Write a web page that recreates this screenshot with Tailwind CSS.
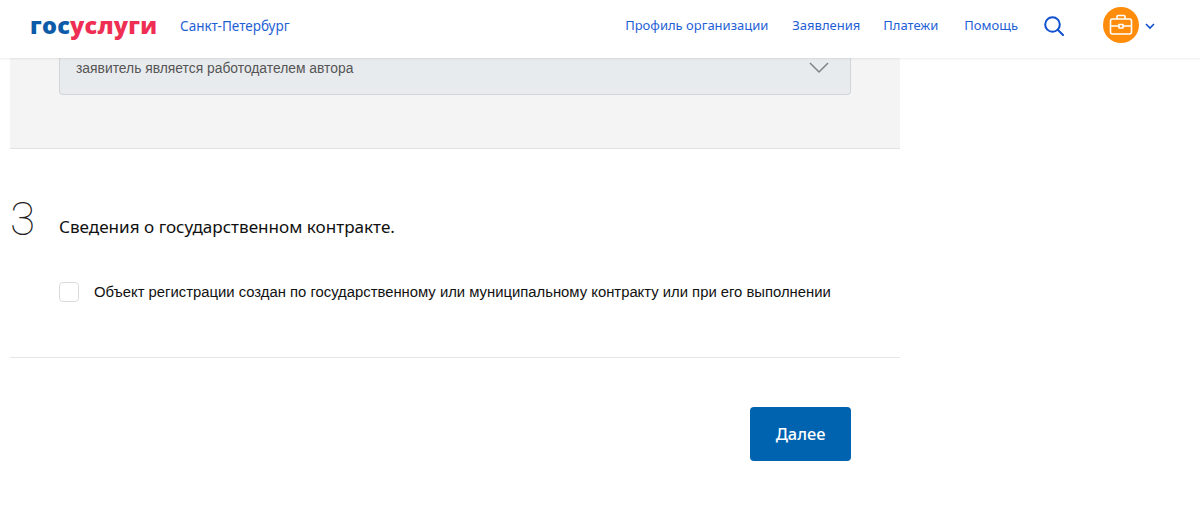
<!DOCTYPE html>
<html lang="ru">
<head>
    <meta charset="UTF-8">
    <script src="https://cdn.jsdelivr.net/npm/@tailwindcss/browser@4"></script>
    <title>Госуслуги</title>
</head>
<body class="bg-white font-['Liberation_Sans',sans-serif] h-[520px] overflow-hidden">
    <!-- Header -->
    <header class="relative z-10 h-[58px] bg-white shadow-[0_1px_2px_rgba(0,0,0,0.08)] flex items-center pl-[30px] pb-[6px] font-['Noto_Sans',sans-serif]">
        <a class="w-[127px] font-['Open_Sans',sans-serif] font-extrabold text-[23.5px] tracking-[0.2px] leading-[24px] -mt-[2px] whitespace-nowrap">
            <span class="text-[#0d5ba8]">гос</span><span class="text-[#ee2f53]">услуги</span>
        </a>
        <a class="ml-[23px] text-[13.5px] text-[#1f5fd6]">Санкт-Петербург</a>
        <nav class="ml-auto flex items-center text-[13px] text-[#1f5fd6]">
            <a class="mr-[24px]">Профиль организации</a>
            <a class="mr-[23px]">Заявления</a>
            <a class="mr-[26px]">Платежи</a>
            <a class="mr-[26px]">Помощь</a>
            <svg class="w-[20px] h-[20px] mr-[39px]" viewBox="0 0 20 20" fill="none" stroke="#0f4fd0" stroke-width="2" stroke-linecap="round"><circle cx="8.5" cy="8.5" r="7.3"/><path d="M14 14l5 5"/></svg>
        </nav>
        <div class="w-[36px] h-[36px] -mt-[2px] rounded-full bg-[#ff8c0a] flex items-center justify-center">
            <svg class="w-[24px] h-[24px]" viewBox="0 0 24 24" fill="none" stroke="#fff" stroke-width="1.6" stroke-linejoin="round">
                <rect x="1.5" y="6" width="21" height="15" rx="2"/>
                <path d="M8 6V3.5a1 1 0 0 1 1-1h6a1 1 0 0 1 1 1V6"/>
                <path d="M1.5 13h8.5M14 13h8.5"/>
                <rect x="10" y="11.5" width="4" height="3.5"/>
            </svg>
        </div>
        <svg class="w-[10px] h-[7px] ml-[6px] mr-[45px]" viewBox="0 0 10 7" fill="none" stroke="#0f4fd0" stroke-width="1.6"><path d="M1 1l4 4 4-4"/></svg>
    </header>

    <main class="ml-[10px] w-[890px]">
        <!-- Previous step, cut off by the header -->
        <section class="h-[91px] bg-[#f4f4f4] border-b border-[#e0e3e5] px-[49px]">
            <div class="h-[37px] bg-[#e8ebee] border border-t-0 border-[#d3d6d9] rounded-b-[4px] flex items-start justify-between pl-[16px] pr-[21px]">
                <span class="text-[13.85px] leading-[20px] text-[#555]">заявитель является работодателем автора</span>
                <svg class="w-[20px] h-[12px] mt-[4px]" viewBox="0 0 20 12" fill="none" stroke="#7d8286" stroke-width="1.5"><path d="M1 1l9 9 9-9"/></svg>
            </div>
        </section>

        <!-- Step 3 -->
        <section class="h-[209px] border-b border-[#e4e6e8]">
            <div class="flex items-start pt-[44px] h-[119px]">
                <span class="w-[49px] font-['Roboto',sans-serif] font-thin text-[46px] leading-[52px] text-[#222]">3</span>
                <h2 class="mt-[22px] font-['Noto_Sans',sans-serif] text-[17.1px] leading-[24px] text-[#111]">Сведения о государственном контракте.</h2>
            </div>
            <label class="flex items-center pl-[49px] mt-[13px]">
                <span class="w-[20px] h-[20px] bg-white border border-[#d9dcde] rounded-[4px]"></span>
                <span class="ml-[15px] mt-[1px] text-[14.84px] leading-[20px] text-[#111]">Объект регистрации создан по государственному или муниципальному контракту или при его выполнении</span>
            </label>
        </section>

        <div class="flex justify-end pr-[49px] pt-[49px]">
            <button class="w-[101px] h-[54px] bg-[#0063b0] rounded-[4px] text-white text-[16.4px] font-['Noto_Sans',sans-serif] font-medium">Далее</button>
        </div>
    </main>
</body>
</html>
